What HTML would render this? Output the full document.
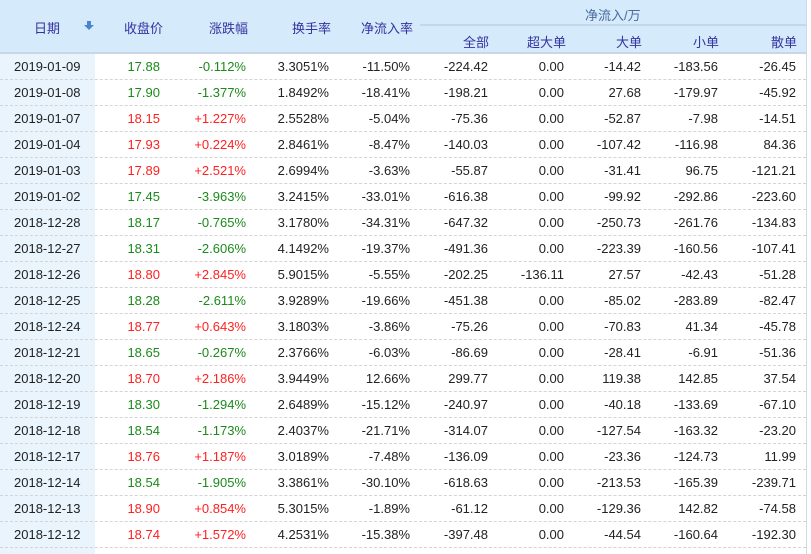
<!DOCTYPE html>
<html><head><meta charset="utf-8"><style>
body{margin:0;width:811px;height:554px;overflow:hidden;background:#fff;font-family:"Liberation Sans","Noto Sans CJK SC",sans-serif;font-size:13px;}
.wrap{position:relative;width:811px;height:554px;}
.hdr{position:absolute;left:0;top:0;width:807px;height:52px;background:#d5eafb;border-bottom:2px solid #c8d6e6;}
.datebg{position:absolute;left:0;top:54px;width:95px;height:500px;background:#e9f4fd;}
.vr{position:absolute;left:806px;top:0;width:1px;height:554px;background:#d0d8e0;}
.h{position:absolute;color:#3333a0;font-size:13px;white-space:nowrap;}
.sub{position:absolute;left:420px;top:24px;width:386px;height:2px;background:#c5d8ea;}
.row{position:absolute;left:0;width:806px;height:26px;border-bottom:1px dashed #d4d4d4;box-sizing:border-box;}
.c{position:absolute;top:5px;white-space:nowrap;color:#222;}
.g{color:#1a8a1a}.r{color:#ff2020}
</style></head><body><div class="wrap">
<div class="hdr"></div><div class="datebg"></div><div class="vr"></div><div class="sub"></div>
<div class="h" style="left:34px;top:18px">日期</div>
<svg style="position:absolute;left:84px;top:21px" width="10" height="10" viewBox="0 0 10 10"><rect x="3" y="0" width="4" height="5" fill="#4a86d0"/><polygon points="0,4 10,4 5,9" fill="#4a86d0"/></svg>
<div class="h" style="left:124px;top:18px">收盘价</div>
<div class="h" style="left:209px;top:18px">涨跌幅</div>
<div class="h" style="left:292px;top:18px">换手率</div>
<div class="h" style="left:361px;top:18px">净流入率</div>
<div class="h" style="left:585px;top:5px;color:#4a6aa0">净流入/万</div>
<div class="h" style="left:463px;top:32px">全部</div>
<div class="h" style="left:527px;top:32px">超大单</div>
<div class="h" style="left:616px;top:32px">大单</div>
<div class="h" style="left:693px;top:32px">小单</div>
<div class="h" style="left:771px;top:32px">散单</div>
<div id="rows"></div>
</div>
<script>
var d=[
["2019-01-09","17.88","-0.112%","3.3051%","-11.50%","-224.42","0.00","-14.42","-183.56","-26.45"],
["2019-01-08","17.90","-1.377%","1.8492%","-18.41%","-198.21","0.00","27.68","-179.97","-45.92"],
["2019-01-07","18.15","+1.227%","2.5528%","-5.04%","-75.36","0.00","-52.87","-7.98","-14.51"],
["2019-01-04","17.93","+0.224%","2.8461%","-8.47%","-140.03","0.00","-107.42","-116.98","84.36"],
["2019-01-03","17.89","+2.521%","2.6994%","-3.63%","-55.87","0.00","-31.41","96.75","-121.21"],
["2019-01-02","17.45","-3.963%","3.2415%","-33.01%","-616.38","0.00","-99.92","-292.86","-223.60"],
["2018-12-28","18.17","-0.765%","3.1780%","-34.31%","-647.32","0.00","-250.73","-261.76","-134.83"],
["2018-12-27","18.31","-2.606%","4.1492%","-19.37%","-491.36","0.00","-223.39","-160.56","-107.41"],
["2018-12-26","18.80","+2.845%","5.9015%","-5.55%","-202.25","-136.11","27.57","-42.43","-51.28"],
["2018-12-25","18.28","-2.611%","3.9289%","-19.66%","-451.38","0.00","-85.02","-283.89","-82.47"],
["2018-12-24","18.77","+0.643%","3.1803%","-3.86%","-75.26","0.00","-70.83","41.34","-45.78"],
["2018-12-21","18.65","-0.267%","2.3766%","-6.03%","-86.69","0.00","-28.41","-6.91","-51.36"],
["2018-12-20","18.70","+2.186%","3.9449%","12.66%","299.77","0.00","119.38","142.85","37.54"],
["2018-12-19","18.30","-1.294%","2.6489%","-15.12%","-240.97","0.00","-40.18","-133.69","-67.10"],
["2018-12-18","18.54","-1.173%","2.4037%","-21.71%","-314.07","0.00","-127.54","-163.32","-23.20"],
["2018-12-17","18.76","+1.187%","3.0189%","-7.48%","-136.09","0.00","-23.36","-124.73","11.99"],
["2018-12-14","18.54","-1.905%","3.3861%","-30.10%","-618.63","0.00","-213.53","-165.39","-239.71"],
["2018-12-13","18.90","+0.854%","5.3015%","-1.89%","-61.12","0.00","-129.36","142.82","-74.58"],
["2018-12-12","18.74","+1.572%","4.2531%","-15.38%","-397.48","0.00","-44.54","-160.64","-192.30"]];
var R=[0,160,246,329,410,488,564,641,718,796],h="";
d.forEach(function(r,i){var cls=r[2][0]=="+"?"r":"g";h+='<div class="row" style="top:'+(54+26*i)+'px">';
h+='<div class="c" style="left:14px">'+r[0]+'</div>';
for(var j=1;j<10;j++){var k=(j<3)?' '+cls:'';h+='<div class="c'+k+'" style="right:'+(806-R[j])+'px">'+r[j]+'</div>';}
h+='</div>';});
document.getElementById('rows').innerHTML=h;
</script></body></html>
